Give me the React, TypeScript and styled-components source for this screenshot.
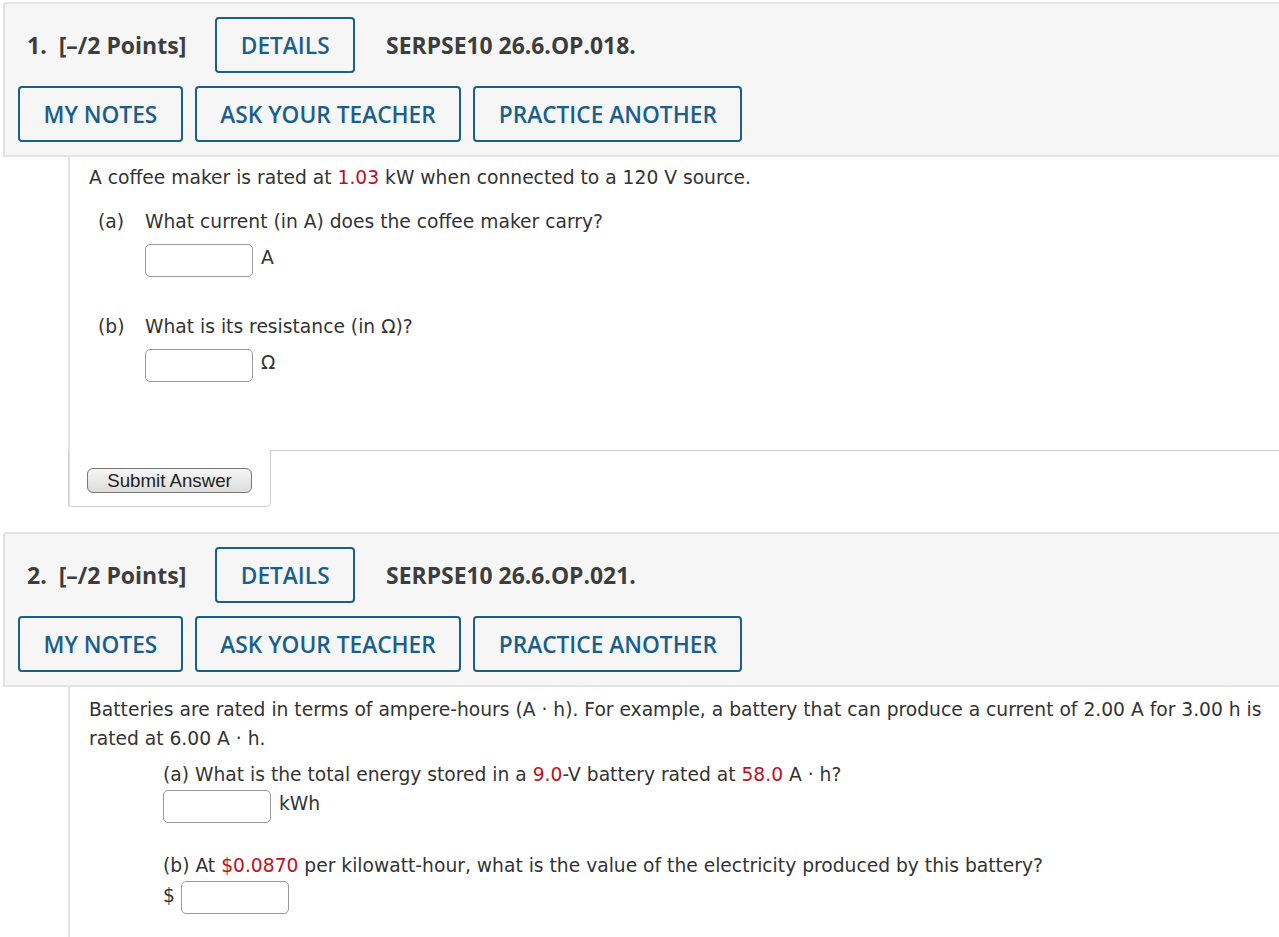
import React from 'react'
import styled, { createGlobalStyle } from 'styled-components'

const GlobalStyle = createGlobalStyle`
  html, body {
    margin: 0;
    padding: 0;
    background: #fff;
    overflow: hidden;
  }
  body {
    font-family: 'DejaVu Sans', Verdana, sans-serif;
    color: #333;
  }
`

interface Part {
  label: string
  text: React.ReactNode
  unit?: string
  prefix?: string
}

interface QuestionData {
  num: number
  code: string
  prompt: React.ReactNode
  parts: Part[]
  style: 'indented' | 'inline'
  submit: boolean
}

const questions: QuestionData[] = [
  {
    num: 1,
    code: 'SERPSE10 26.6.OP.018.',
    prompt: (
      <>
        A coffee maker is rated at <Red>1.03</Red> kW when connected to a 120 V source.
      </>
    ),
    parts: [
      { label: '(a)', text: 'What current (in A) does the coffee maker carry?', unit: 'A' },
      { label: '(b)', text: 'What is its resistance (in Ω)?', unit: 'Ω' }
    ],
    style: 'indented',
    submit: true
  },
  {
    num: 2,
    code: 'SERPSE10 26.6.OP.021.',
    prompt: (
      <>
        Batteries are rated in terms of ampere-hours (A · h). For example, a battery that can produce a
        current of 2.00 A for 3.00 h is rated at 6.00 A · h.
      </>
    ),
    parts: [
      {
        label: '(a)',
        text: (
          <>
            What is the total energy stored in a <Red>9.0</Red>-V battery rated at <Red>58.0</Red> A · h?
          </>
        ),
        unit: 'kWh'
      },
      {
        label: '(b)',
        text: (
          <>
            At <Red>$0.0870</Red> per kilowatt-hour, what is the value of the electricity produced by this
            battery?
          </>
        ),
        prefix: '$'
      }
    ],
    style: 'inline',
    submit: false
  }
]

export default function App() {
  return (
    <Page>
      <GlobalStyle />
      {questions.map(q => (
        <Question key={q.num}>
          <Header>
            <TopRow>
              <Points>
                {q.num}.&nbsp; [–/2 Points]
              </Points>
              <LinkButton>DETAILS</LinkButton>
              <Code>{q.code}</Code>
            </TopRow>
            <ButtonRow>
              <LinkButton>MY NOTES</LinkButton>
              <LinkButton>ASK YOUR TEACHER</LinkButton>
              <LinkButton>PRACTICE ANOTHER</LinkButton>
            </ButtonRow>
          </Header>
          <Body $last={!q.submit}>
            <Prompt $wide={q.style === 'inline'}>{q.prompt}</Prompt>
            {q.parts.map(p =>
              q.style === 'indented' ? (
                <IndentedPart key={p.label}>
                  <PartLabel>{p.label}</PartLabel>
                  <PartMain>
                    <PartText>{p.text}</PartText>
                    <AnswerRow>
                      <AnswerBox />
                      {p.unit && <Unit>{p.unit}</Unit>}
                    </AnswerRow>
                  </PartMain>
                </IndentedPart>
              ) : (
                <InlinePart key={p.label}>
                  <PartText>
                    {p.label} {p.text}
                  </PartText>
                  <AnswerRow>
                    {p.prefix && <Prefix>{p.prefix}</Prefix>}
                    <AnswerBox />
                    {p.unit && <Unit>{p.unit}</Unit>}
                  </AnswerRow>
                </InlinePart>
              )
            )}
            {q.submit && (
              <SubmitBar>
                <SubmitCell>
                  <SubmitButton>Submit Answer</SubmitButton>
                </SubmitCell>
                <SubmitFiller />
              </SubmitBar>
            )}
          </Body>
        </Question>
      ))}
    </Page>
  )
}

function Red({ children }: { children: React.ReactNode }) {
  return <RedText>{children}</RedText>
}

const Page = styled.div`
  width: 1320px;
  padding: 2px 0 0 3px;
`

const Question = styled.section`
  margin-bottom: 25px;
`

const Header = styled.div`
  background: #f6f6f6;
  border: 2px solid #e3e3e3;
  border-right: none;
  border-radius: 4px 0 0 0;
  padding: 13px 0 13px 13px;
  display: flex;
  flex-direction: column;
  gap: 13px;
  font-family: 'Open Sans', 'Noto Sans', sans-serif;
`

const TopRow = styled.div`
  display: flex;
  align-items: center;
`

const Points = styled.div`
  font-size: 23px;
  font-weight: 700;
  color: #3d3d3d;
  margin-left: 9px;
  margin-right: 29px;
  white-space: pre;
`

const Code = styled.div`
  font-size: 22.9px;
  font-weight: 700;
  color: #3d3d3d;
  margin-left: 31px;
`

const ButtonRow = styled.div`
  display: flex;
  gap: 12px;
`

const LinkButton = styled.button`
  font-family: 'Open Sans', 'Noto Sans', sans-serif;
  font-size: 22.7px;
  font-weight: 600;
  color: #1a5f8c;
  background: transparent;
  border: 2px solid #1a5f8c;
  border-radius: 4px;
  height: 56px;
  padding: 0 23.5px;
  cursor: pointer;
`

const Body = styled.div<{ $last: boolean }>`
  margin-left: 65px;
  border-left: 2px solid #e2e2e2;
  display: flex;
  flex-direction: column;
  padding-top: ${({ $last }) => ($last ? '8px' : '9px')};
  padding-bottom: ${({ $last }) => ($last ? '20px' : '0')};
  font-size: 18.7px;
  color: #333;
`

const Prompt = styled.div<{ $wide: boolean }>`
  padding-left: 19px;
  line-height: ${({ $wide }) => ($wide ? '29px' : '24px')};
  width: ${({ $wide }) => ($wide ? '1195px' : 'auto')};
  margin-bottom: ${({ $wide }) => ($wide ? '10px' : '20px')};
`

const RedText = styled.span`
  color: #c0101f;
`

const IndentedPart = styled.div`
  display: flex;
  padding-left: 28px;
  margin-bottom: 38px;
`

const PartLabel = styled.div`
  width: 47px;
  line-height: 24px;
`

const PartMain = styled.div`
  display: flex;
  flex-direction: column;
  gap: 10px;
`

const PartText = styled.div`
  line-height: 24px;
`

const InlinePart = styled.div`
  display: flex;
  flex-direction: column;
  padding-left: 93px;
  margin-bottom: 31px;
  gap: 3px;
`

const AnswerRow = styled.div`
  display: flex;
  align-items: flex-start;
  gap: 8px;
`

const AnswerBox = styled.div`
  width: 106px;
  height: 31px;
  border: 1.5px solid #9a9a9a;
  border-radius: 5px;
  background: #fff;
`

const Unit = styled.span`
  line-height: 24px;
  margin-top: 2px;
`

const Prefix = styled.span`
  line-height: 24px;
  margin-top: 3px;
  margin-right: -2px;
`

const SubmitBar = styled.div`
  display: flex;
  margin-top: 30px;
`

const SubmitCell = styled.div`
  margin-left: -2px;
  width: 183px;
  padding: 18px 0 13px 18px;
  border: 1px solid #cfcfcf;
  border-top: none;
  border-radius: 0 0 5px 5px;
`

const SubmitFiller = styled.div`
  flex: 1;
  border-top: 1.5px solid #cfcfcf;
`

const SubmitButton = styled.button`
  font-family: 'Liberation Sans', Arial, sans-serif;
  font-size: 18.7px;
  color: #222;
  width: 165px;
  height: 25px;
  padding: 0;
  border: 1px solid #777;
  border-radius: 6px;
  background: linear-gradient(#f6f6f6, #dcdcdc);
`
